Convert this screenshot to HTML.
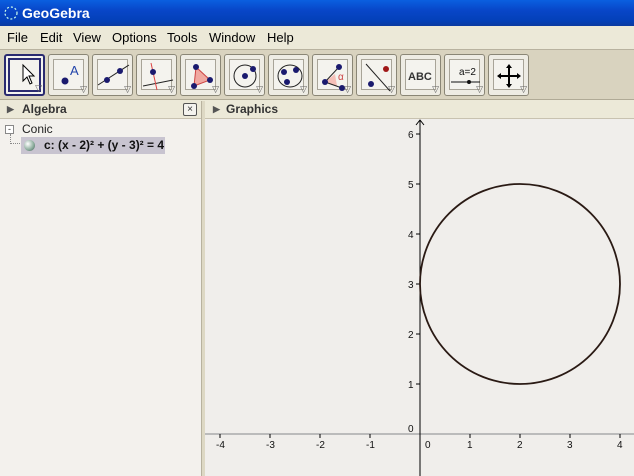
<!DOCTYPE html>
<html><head><meta charset="utf-8"><style>
*{margin:0;padding:0;box-sizing:border-box}
body{width:634px;height:476px;overflow:hidden;background:#ece9d8;font-family:"Liberation Sans",Tahoma,sans-serif;position:relative}
.title{position:absolute;left:0;top:0;width:634px;height:26px;background:linear-gradient(#0a5fe0,#0846c8 40%,#0340b8 80%,#0a3aa0);color:#fff;font-weight:bold;font-size:14px;line-height:26px;padding-left:22px}
.menu{position:absolute;left:0;top:26px;width:634px;height:24px;background:#ece9d8;font-size:13px;line-height:23px;border-bottom:1px solid #b8b29f}
.menu span{position:absolute;top:0}
.tb{position:absolute;left:0;top:50px;width:634px;height:50px;background:#d9d3bf;border-bottom:1px solid #b0aa96}
.btn{position:absolute;top:4px;width:41px;height:42px;border:1px solid #8a8676;border-radius:3px;background:#eeece4}
.btn .in{position:absolute;left:4px;top:4px;width:31px;height:31px;border:1px solid #a8a498;background:#f4f3ee}
.btn .tri{position:absolute;right:1px;bottom:0;font-size:9px;color:#666}
.btn svg{position:absolute;left:0;top:0}
.left{position:absolute;left:0;top:101px;width:201px;height:375px;background:#f3f1ed}
.right{position:absolute;left:205px;top:101px;width:429px;height:375px;background:#f0eeeb}
.div{position:absolute;left:201px;top:101px;width:4px;height:375px;background:#ddd8c4;border-left:1px solid #b8b29f}
.hdr{position:absolute;top:0;left:0;right:0;height:18px;background:#ece9d8;border-bottom:1px solid #c8c2b0;font-weight:bold;font-size:12px;line-height:17px;color:#333}
</style></head><body>
<div class="title"><svg style="position:absolute;left:3px;top:5px" width="16" height="16"><circle cx="8" cy="8" r="6" fill="none" stroke="#cfe" stroke-width="1.2" stroke-dasharray="2 2"/></svg>GeoGebra</div>
<div class="menu"><span style="left:7px">File</span><span style="left:40px">Edit</span><span style="left:73px">View</span><span style="left:112px">Options</span><span style="left:167px">Tools</span><span style="left:209px">Window</span><span style="left:267px">Help</span></div>
<div class="tb">
<div class="btn" style="left:4px;border:2px solid #2a2a70;background:#f4f3ee"><div class="in" style="border:2px solid #2a2a70;left:2px;top:2px;width:33px;height:34px"></div><svg width="41" height="42"><path d="M17 9 L17 25 L21 21 L24 28 L26 27 L23 20 L28 20 Z" fill="#fff" stroke="#000"/></svg><span class="tri">▽</span></div>
<div class="btn" style="left:48px"><div class="in"></div><svg width="41" height="42"><circle cx="16" cy="26" r="3.5" fill="#1a1a6e"/><text x="21" y="20" font-size="13" fill="#2244aa" font-family="Liberation Sans">A</text></svg><span class="tri">▽</span></div>
<div class="btn" style="left:92px"><div class="in"></div><svg width="41" height="42"><line x1="5" y1="30" x2="36" y2="10" stroke="#222"/><circle cx="14" cy="25" r="3" fill="#1a1a6e"/><circle cx="27" cy="16" r="3" fill="#1a1a6e"/></svg><span class="tri">▽</span></div>
<div class="btn" style="left:136px"><div class="in"></div><svg width="41" height="42"><line x1="6" y1="31" x2="36" y2="25" stroke="#222"/><line x1="14" y1="8" x2="20" y2="35" stroke="#d44"/><circle cx="16" cy="17" r="3" fill="#1a1a6e"/></svg><span class="tri">▽</span></div>
<div class="btn" style="left:180px"><div class="in"></div><svg width="41" height="42"><polygon points="15,12 29,25 13,31" fill="#f0a8a0" stroke="#c44"/><circle cx="15" cy="12" r="3" fill="#1a1a6e"/><circle cx="29" cy="25" r="3" fill="#1a1a6e"/><circle cx="13" cy="31" r="3" fill="#1a1a6e"/></svg><span class="tri">▽</span></div>
<div class="btn" style="left:224px"><div class="in"></div><svg width="41" height="42"><circle cx="20" cy="21" r="11" fill="none" stroke="#222"/><circle cx="20" cy="21" r="3" fill="#1a1a6e"/><circle cx="28" cy="14" r="3" fill="#1a1a6e"/></svg><span class="tri">▽</span></div>
<div class="btn" style="left:268px"><div class="in"></div><svg width="41" height="42"><ellipse cx="21" cy="21" rx="12" ry="11" fill="none" stroke="#222"/><circle cx="15" cy="17" r="3" fill="#1a1a6e"/><circle cx="27" cy="15" r="3" fill="#1a1a6e"/><circle cx="18" cy="27" r="3" fill="#1a1a6e"/></svg><span class="tri">▽</span></div>
<div class="btn" style="left:312px"><div class="in"></div><svg width="41" height="42"><path d="M12 27 L22 19 L24 31 Z" fill="#f5c0b8"/><line x1="12" y1="27" x2="26" y2="12" stroke="#222"/><line x1="12" y1="27" x2="29" y2="33" stroke="#222"/><text x="25" y="25" font-size="10" fill="#c44">α</text><circle cx="12" cy="27" r="3" fill="#1a1a6e"/><circle cx="26" cy="12" r="3" fill="#1a1a6e"/><circle cx="29" cy="33" r="3" fill="#1a1a6e"/></svg><span class="tri">▽</span></div>
<div class="btn" style="left:356px"><div class="in"></div><svg width="41" height="42"><line x1="9" y1="9" x2="33" y2="36" stroke="#222"/><circle cx="29" cy="14" r="3" fill="#a01818"/><circle cx="14" cy="29" r="3" fill="#1a1a6e"/></svg><span class="tri">▽</span></div>
<div class="btn" style="left:400px"><div class="in"></div><svg width="41" height="42"><text x="7" y="25" font-size="11" font-weight="bold" fill="#333" font-family="Liberation Sans">ABC</text></svg><span class="tri">▽</span></div>
<div class="btn" style="left:444px"><div class="in"></div><svg width="41" height="42"><text x="14" y="20" font-size="10" fill="#111" font-family="Liberation Sans">a=2</text><line x1="6" y1="27" x2="35" y2="27" stroke="#111"/><circle cx="24" cy="27" r="2" fill="#111"/></svg><span class="tri">▽</span></div>
<div class="btn" style="left:488px"><div class="in"></div><svg width="41" height="42"><path d="M20 12 V30 M11 21 H29" stroke="#000" stroke-width="2"/><path d="M20 9 L17 13 H23Z M20 33 L17 29 H23Z M8 21 L12 18 V24Z M32 21 L28 18 V24Z" fill="#000"/></svg><span class="tri">▽</span></div>
</div>
<div class="left"><div class="hdr"><span style="position:absolute;left:7px;font-size:9px;color:#555">▶</span><span style="position:absolute;left:22px">Algebra</span><span style="position:absolute;left:183px;top:2px;width:14px;height:13px;border:1px solid #555;border-radius:2px;font-size:10px;line-height:11px;text-align:center;font-weight:normal;background:#f4f3ee">×</span></div>
<div style="position:absolute;left:5px;top:24px;width:9px;height:9px;border:1px solid #888;background:#fff;font-size:9px;line-height:6px;text-align:center;color:#333">-</div>
<div style="position:absolute;left:22px;top:21px;font-size:12px;color:#222">Conic</div>
<div style="position:absolute;left:10px;top:33px;height:10px;border-left:1px dotted #888;width:10px;border-bottom:1px dotted #888"></div>
<div style="position:absolute;left:21px;top:36px;width:144px;height:17px;background:#c8c4d0"></div>
<div style="position:absolute;left:24px;top:39px;width:11px;height:11px;border-radius:50%;background:radial-gradient(circle at 35% 35%,#fff,#8a9 60%,#455)"></div>
<div style="position:absolute;left:44px;top:37px;font-size:12px;font-weight:bold;color:#111">c: (x - 2)² + (y - 3)² = 4</div>
</div>
<div class="div"></div>
<div class="right"><div class="hdr"><span style="position:absolute;left:8px;font-size:9px;color:#555">▶</span><span style="position:absolute;left:21px">Graphics</span></div></div>
<svg style="position:absolute;left:0;top:0" width="634" height="476" font-family="Liberation Sans" font-size="10">
<line x1="205" y1="434" x2="634" y2="434" stroke="#bbb" stroke-width="2"/>
<line x1="420" y1="120" x2="420" y2="476" stroke="#000"/>
<path d="M416 125 L420 120 L424 125" fill="none" stroke="#000"/>
<g stroke="#000">
<line x1="220" y1="434" x2="220" y2="438"/><line x1="270" y1="434" x2="270" y2="438"/><line x1="320" y1="434" x2="320" y2="438"/><line x1="370" y1="434" x2="370" y2="438"/><line x1="470" y1="434" x2="470" y2="438"/><line x1="520" y1="434" x2="520" y2="438"/><line x1="570" y1="434" x2="570" y2="438"/><line x1="620" y1="434" x2="620" y2="438"/>
<line x1="416" y1="134" x2="420" y2="134"/><line x1="416" y1="184" x2="420" y2="184"/><line x1="416" y1="234" x2="420" y2="234"/><line x1="416" y1="284" x2="420" y2="284"/><line x1="416" y1="334" x2="420" y2="334"/><line x1="416" y1="384" x2="420" y2="384"/>
</g>
<g fill="#111">
<text x="216" y="448">-4</text><text x="266" y="448">-3</text><text x="316" y="448">-2</text><text x="366" y="448">-1</text><text x="425" y="448">0</text><text x="467" y="448">1</text><text x="517" y="448">2</text><text x="567" y="448">3</text><text x="617" y="448">4</text>
<text x="408" y="432">0</text><text x="408" y="138">6</text><text x="408" y="188">5</text><text x="408" y="238">4</text><text x="408" y="288">3</text><text x="408" y="338">2</text><text x="408" y="388">1</text>
</g>
<circle cx="520" cy="284" r="100" fill="none" stroke="#2a1a14" stroke-width="1.8"/>
</svg>
</body></html>
